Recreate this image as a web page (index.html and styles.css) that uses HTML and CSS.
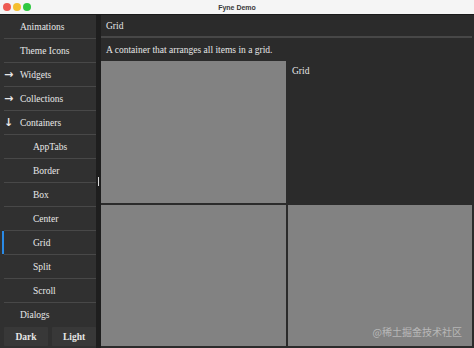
FILE: index.html
```html
<!DOCTYPE html>
<html>
<head>
<meta charset="utf-8">
<link rel="stylesheet" href="styles.css">
</head>
<body>
<div class="window">
  <div class="titlebar">
    <div class="lights">
      <span class="light red"></span>
      <span class="light yellow"></span>
      <span class="light green"></span>
    </div>
    <div class="title">Fyne Demo</div>
  </div>
  <div class="main">
    <div class="sidebar">
      <div class="list">
        <div class="row top">Animations</div>
        <div class="row top">Theme Icons</div>
        <div class="row top"><span class="arrow">→</span>Widgets</div>
        <div class="row top"><span class="arrow">→</span>Collections</div>
        <div class="row top"><span class="arrow">↓</span>Containers</div>
        <div class="row child">AppTabs</div>
        <div class="row child">Border</div>
        <div class="row child">Box</div>
        <div class="row child">Center</div>
        <div class="row child selected">Grid</div>
        <div class="row child">Split</div>
        <div class="row child">Scroll</div>
        <div class="row top last">Dialogs</div>
      </div>
      <div class="buttons">
        <div class="btn">Dark</div>
        <div class="btn">Light</div>
      </div>
    </div>
    <div class="divider"><span class="handle"></span></div>
    <div class="content">
      <div class="header">Grid</div>
      <div class="desc">A container that arranges all items in a grid.</div>
      <div class="grid">
        <div class="cell"></div>
        <div class="cell label">Grid</div>
        <div class="cell"></div>
        <div class="cell"></div>
      </div>
      <div class="watermark">@稀土掘金技术社区</div>
    </div>
  </div>
</div>
</body>
</html>
```

FILE: styles.css
```css
html, body {
  margin: 0;
  padding: 0;
  background: #2b2b2b;
}
.window {
  width: 474px;
  height: 348px;
  display: flex;
  flex-direction: column;
  font-family: "Liberation Serif", "DejaVu Serif", serif;
  color: #e6e6e6;
  overflow: hidden;
}
.titlebar {
  height: 15px;
  background: #f5f5f5;
  position: relative;
  display: flex;
  align-items: center;
  justify-content: center;
  border-bottom: 1px solid #1a1a1a;
  box-sizing: border-box;
}
.lights {
  position: absolute;
  left: 3px;
  top: 3px;
  display: flex;
  gap: 2px;
}
.light {
  width: 8px;
  height: 8px;
  border-radius: 50%;
  display: block;
}
.red { background: #ee5a52; }
.yellow { background: #f5bf2f; }
.green { background: #2fc840; }
.title {
  font-family: "Liberation Sans", Arial, sans-serif;
  font-weight: bold;
  font-size: 7px;
  color: #3a3a3a;
}
.main {
  flex: 1;
  display: flex;
  min-height: 0;
}
.sidebar {
  width: 96px;
  background: #303030;
  display: flex;
  flex-direction: column;
}
.list {
  flex: 1;
  display: flex;
  flex-direction: column;
  padding-left: 4px;
}
.row {
  height: 23px;
  border-bottom: 1px solid #484848;
  display: flex;
  align-items: center;
  font-size: 9.5px;
  position: relative;
  color: #e8e8e8;
}
.row.last { border-bottom: none; }
.row.top { padding-left: 16px; }
.row.child { padding-left: 29px; }
.arrow {
  position: absolute;
  left: 0px;
  font-family: "DejaVu Sans", sans-serif;
  font-size: 11px;
  font-weight: bold;
}
.selected::before {
  content: "";
  position: absolute;
  left: -2px;
  top: 0;
  width: 2px;
  height: 23px;
  background: #2a8ae6;
}
.buttons {
  display: flex;
  gap: 4px;
  padding: 0 0 2px 4px;
  height: 21px;
  box-sizing: border-box;
}
.btn {
  flex: 1;
  background: #383838;
  display: flex;
  align-items: center;
  justify-content: center;
  font-weight: bold;
  font-size: 9.5px;
  border-radius: 1px;
}
.divider {
  width: 5px;
  background: #1e1e1e;
  position: relative;
}
.handle {
  position: absolute;
  left: 2px;
  top: 162px;
  width: 1px;
  height: 9px;
  background: #dcdcdc;
}
.content {
  flex: 1;
  display: flex;
  flex-direction: column;
  position: relative;
  padding-right: 2px;
}
.header {
  height: 21px;
  display: flex;
  align-items: center;
  padding-left: 5px;
  font-size: 9.5px;
  border-bottom: 2px solid #474747;
}
.desc {
  height: 23px;
  display: flex;
  align-items: center;
  padding-left: 5px;
  font-size: 9.5px;
}
.grid {
  flex: 1;
  display: grid;
  grid-template-columns: 185px 1fr;
  grid-template-rows: 1fr 1fr;
  gap: 2px;
  padding-bottom: 2px;
}
.cell {
  background: #828282;
}
.cell.label {
  background: transparent;
  padding: 5px 0 0 4px;
  font-size: 9.5px;
}
.watermark {
  position: absolute;
  right: 12px;
  bottom: 9px;
  font-family: "Noto Sans CJK SC", sans-serif;
  font-size: 10px;
  color: rgba(230, 230, 230, 0.55);
}
```
